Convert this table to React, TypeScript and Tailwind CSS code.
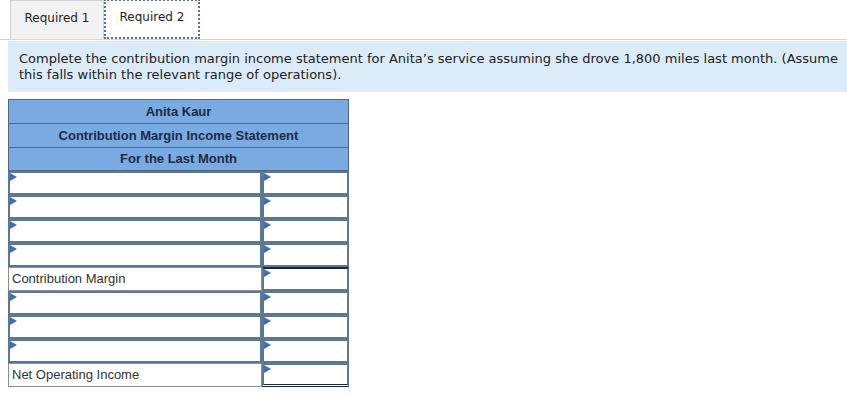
import React from 'react';

const rows: { label?: string; total?: 'single' | 'double' }[] = [
  {},
  {},
  {},
  {},
  { label: 'Contribution Margin', total: 'single' },
  {},
  {},
  {},
  { label: 'Net Operating Income', total: 'double' },
];

function Flag() {
  return (
    <svg className="absolute left-0 top-0" width="7" height="8" viewBox="0 0 7 8">
      <path d="M0 0 L7 4 L0 8 Z" fill="#3f6fa8" />
    </svg>
  );
}

function InputCell({ className = '' }: { className?: string }) {
  return (
    <div className={`relative h-full border-2 border-[#5d7797] bg-white ${className}`}>
      <Flag />
    </div>
  );
}

export default function App() {
  return (
    <div className="h-[396px] w-[847px] overflow-hidden bg-white font-['DejaVu_Sans',Verdana,sans-serif]">
      <div className="flex h-10 items-end border-b border-[#d6d6d6] pl-[10px]">
        <div className="flex h-[39px] w-[94px] justify-center border-x border-t border-[#d0d0d0] bg-[#f2f2f2] pt-[8px] text-[12px] text-[#222]">
          Required 1
        </div>
        <div className="flex h-[40px] w-[96px] justify-center border-2 border-dotted border-[#5b6f86] bg-white pt-[7px] text-[12px] text-[#222]">
          Required 2
        </div>
      </div>

      <div className="ml-2 mt-px bg-[#dcebf8] pb-[9px] pl-[11px] pr-[2px] pt-[10px] text-[13px] leading-[16px] text-[#222]">
        Complete the contribution margin income statement for Anita’s service assuming she drove 1,800 miles last month. (Assume this falls within the relevant range of operations).
      </div>

      <div className="ml-2 mt-[7px] w-[341px] font-['Liberation_Sans',Arial,sans-serif]">
        <div className="border border-[#55677f] bg-[#79aae2] text-[13px] font-bold text-[#1d2b45]">
          <div className="flex h-6 items-center justify-center border-b border-[#55677f]">Anita Kaur</div>
          <div className="flex h-6 items-center justify-center border-b border-[#55677f]">
            Contribution Margin Income Statement
          </div>
          <div className="flex h-[22px] items-center justify-center">For the Last Month</div>
        </div>

        {rows.map((r, i) => (
          <div key={i} className="flex h-6">
            {r.label ? (
              <div className="flex h-full w-[254px] items-center border border-[#8a8f96] bg-white pl-[3px] text-[13px] text-[#333]">
                {r.label}
              </div>
            ) : (
              <div className="w-[254px]">
                <InputCell />
              </div>
            )}
            <div className="w-[87px]">
              {r.total === 'single' && <InputCell className="border-t-[#1b2740]" />}
              {r.total === 'double' && (
                <InputCell className="border-b-[3px] border-double border-b-[#1b2740]" />
              )}
              {!r.total && <InputCell />}
            </div>
          </div>
        ))}
      </div>
    </div>
  );
}
